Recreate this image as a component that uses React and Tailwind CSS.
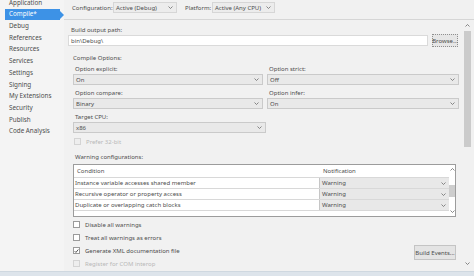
import { useState } from "react";

const pages = ["Application", "Compile*", "Debug", "References", "Resources", "Services", "Settings", "Signing", "My Extensions", "Security", "Publish", "Code Analysis"];

function Chevron({ className = "" }) {
    return (
        <svg width="5" height="3" viewBox="0 0 5 3" className={className}>
            <path d="M0.5 0.5 L2.5 2.5 L4.5 0.5" fill="none" stroke="#6b6b6b" strokeWidth="0.8" />
        </svg>
    );
}

function Select({ value, className = "" }) {
    return (
        <div className={`flex items-center justify-between h-[11px] border border-[#cacaca] bg-[#e9e9e9] pl-[2px] pr-[3px] ${className}`}>
            <span>{value}</span>
            <Chevron />
        </div>
    );
}

function Check({ label, checked, disabled }) {
    return (
        <div className={`flex items-center gap-[5px] h-[13px] ${disabled ? "text-[#b8b8b8]" : ""}`}>
            <div className={`w-[7px] h-[7px] border flex items-center justify-center ${disabled ? "border-[#d4d4d4] bg-[#eeeeee]" : "border-[#9a9a9a] bg-white"}`}>
                {checked && (
                    <svg width="6" height="6" viewBox="0 0 6 6">
                        <path d="M0.8 3.2 L2.3 4.7 L5.2 1.2" fill="none" stroke="#333" strokeWidth="1" />
                    </svg>
                )}
            </div>
            <span>{label}</span>
        </div>
    );
}

export default function App() {
    const [selected] = useState(1);
    const rows = ["Instance variable accesses shared member", "Recursive operator or property access", "Duplicate or overlapping catch blocks"];

    return (
        <div className="w-[474px] h-[276px] overflow-hidden flex flex-col bg-[#f1f1f1] text-[#4d4d4d] text-[6px] leading-none" style={{ fontFamily: '"Noto Sans", "Open Sans", sans-serif' }}>
            <div className="flex flex-1 min-h-0">
                {/* Sidebar */}
                <div className="w-[64px] shrink-0 bg-[#f4f4f4] -mt-[3px] text-[6.3px]">
                    {pages.map((p, i) => (
                        i === selected ? (
                            <div key={p} className="relative h-[11.7px] ml-[5px] mr-[4px] bg-[#3d92e6] text-white flex items-center pl-[4px]">
                                {p}
                                <div className="absolute -right-[4px] top-[2px] w-0 h-0 border-y-[4px] border-y-transparent border-l-[4px] border-l-[#3d92e6]" />
                            </div>
                        ) : (
                            <div key={p} className="h-[11.7px] flex items-center pl-[9px]">{p}</div>
                        )
                    ))}
                </div>

                {/* Main */}
                <div className="flex-1 flex flex-col min-w-0">
                    <div className="h-[20px] shrink-0 flex items-center pl-[8px] border-b border-[#d6d6d6] pb-[4px]">
                        <span className="w-[41px]">Configuration:</span>
                        <Select value="Active (Debug)" className="w-[64px] border-[#d6d6d6] bg-[#ececec]" />
                        <span className="ml-[8px] w-[27px]">Platform:</span>
                        <Select value="Active (Any CPU)" className="w-[63px] border-[#d6d6d6] bg-[#ececec]" />
                    </div>

                    <div className="flex-1 flex min-h-0">
                        <div className="flex-1 pl-[4px] pr-[4px] min-w-0">
                            <div className="h-[14px] flex items-end pl-[3px] pb-[1px]">Build output path:</div>
                            <div className="flex items-center gap-[4px]">
                                <div className="w-[360px] h-[11px] bg-white border border-[#dadada] flex items-center pl-[2px]">bin\Debug\</div>
                                <div className="w-[26px] h-[13px] border border-dotted border-[#8f8f8f] bg-[#e6e6e6] flex items-center justify-center whitespace-nowrap">Browse...</div>
                            </div>

                            <div className="pl-[5px]">
                                <div className="h-[14px] flex items-end">Compile Options:</div>
                                <div className="grid grid-cols-[190px_192px] gap-x-[4px]">
                                    <div className="h-[13px] flex items-end pb-[2px] pl-[2px]">Option explicit:</div>
                                    <div className="h-[13px] flex items-end pb-[2px] pl-[2px]">Option strict:</div>
                                    <Select value="On" />
                                    <Select value="Off" />
                                    <div className="h-[13px] flex items-end pb-[2px] pl-[2px]">Option compare:</div>
                                    <div className="h-[13px] flex items-end pb-[2px] pl-[2px]">Option infer:</div>
                                    <Select value="Binary" />
                                    <Select value="On" />
                                    <div className="h-[13px] flex items-end pb-[2px] pl-[2px]">Target CPU:</div>
                                    <div />
                                    <Select value="x86" className="w-[193px]" />
                                    <div />
                                </div>
                                <div className="mt-[2px] pl-[1px]">
                                    <Check label="Prefer 32-bit" disabled />
                                </div>
                                <div className="h-[14px] flex items-center pl-[2px] mt-[2px]">Warning configurations:</div>
                                <div className="w-[383px] h-[53px] border border-[#9c9c9c] bg-white flex">
                                    <div className="flex-1 flex flex-col">
                                        <div className="h-[12px] flex items-center">
                                            <span className="w-[245px] pl-[3px]">Condition</span>
                                            <span className="pl-[4px]">Notification</span>
                                        </div>
                                        {rows.map((r) => (
                                            <div key={r} className="h-[11px] flex border-t border-[#d8d8d8]">
                                                <div className="w-[245px] flex items-center pl-[1px]">{r}</div>
                                                <div className="flex-1 flex items-center justify-between bg-[#e8e8e8] border-l border-[#c6c6c6] pl-[2px] pr-[3px]">
                                                    <span>Warning</span>
                                                    <Chevron />
                                                </div>
                                            </div>
                                        ))}
                                        <div className="flex-1 border-t border-[#d8d8d8]" />
                                    </div>
                                    <div className="w-[6px] flex flex-col items-center justify-between py-[3px]">
                                        <Chevron className="rotate-180" />
                                        <div className="w-[6px] h-[12px] bg-[#cdcdcd] mt-[14px]" />
                                        <div className="flex-1" />
                                        <Chevron />
                                    </div>
                                </div>
                                <div className="mt-[1px] flex">
                                    <div className="flex-1">
                                        <Check label="Disable all warnings" />
                                        <Check label="Treat all warnings as errors" />
                                        <Check label="Generate XML documentation file" checked />
                                        <Check label="Register for COM interop" disabled />
                                    </div>
                                    <div className="pt-[27px] pr-[3px]">
                                        <div className="w-[42px] h-[15px] border border-[#c4c4c4] bg-[#e4e4e4] flex items-center justify-center whitespace-nowrap">Build Events...</div>
                                    </div>
                                </div>
                            </div>
                        </div>

                        {/* Scrollbar */}
                        <div className="w-[8px] shrink-0 mr-[3px] flex flex-col items-center pt-[4px] pb-[6px]">
                            <Chevron className="rotate-180" />
                            <div className="w-[7px] flex-1 max-h-[203px] bg-[#cbcbcb] mt-[4px]" />
                            <div className="flex-1" />
                            <Chevron />
                        </div>
                    </div>
                </div>
            </div>
            <div className="h-[5px] shrink-0 bg-[#dde4eb] border-t border-[#cfd8e0]" />
        </div>
    );
}
